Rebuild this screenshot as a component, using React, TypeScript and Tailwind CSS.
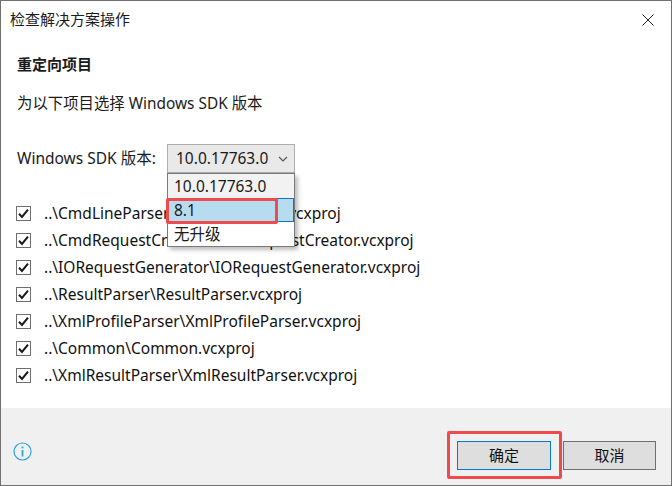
const projects = [
  '..\\CmdLineParser\\CmdLineParser.vcxproj',
  '..\\CmdRequestCreator\\CmdRequestCreator.vcxproj',
  '..\\IORequestGenerator\\IORequestGenerator.vcxproj',
  '..\\ResultParser\\ResultParser.vcxproj',
  '..\\XmlProfileParser\\XmlProfileParser.vcxproj',
  '..\\Common\\Common.vcxproj',
  '..\\XmlResultParser\\XmlResultParser.vcxproj',
]

function CheckRow({ label }: { label: string }) {
  return (
    <div className="flex h-[27px] items-center">
      <span className="-ml-[1px] flex h-[15px] w-[15px] shrink-0 items-center justify-center border border-[#6e6e6e] bg-white">
        <svg width="13" height="13" viewBox="0 0 13 13" fill="none">
          <path d="M2 6.8 L5 10 L11 2.6" stroke="#1a1a1a" strokeWidth="2" />
        </svg>
      </span>
      <span className="ml-[13px] whitespace-nowrap text-[#111]">{label}</span>
    </div>
  )
}

export default function App() {
  return (
    <div
      className="relative flex h-[486px] w-[672px] flex-col overflow-hidden border border-[#707070] bg-white text-[15.5px] text-[#1a1a1a]"
      style={{ fontFamily: '"Noto Sans", "Noto Sans CJK SC", sans-serif' }}
    >
      {/* Title bar */}
      <div className="flex h-[37px] shrink-0 items-center justify-between pl-[9px] pr-[16px]">
        <span className="text-[15px] leading-none">检查解决方案操作</span>
        <svg width="14" height="14" viewBox="0 0 14 14" fill="none">
          <path d="M1.5 1.5 L12.5 12.5 M12.5 1.5 L1.5 12.5" stroke="#222" strokeWidth="1" />
        </svg>
      </div>

      {/* Body */}
      <div className="flex-1 pl-[16px]">
        <div className="mt-[15px] text-[15px] font-bold leading-[22px]">重定向项目</div>
        <div className="mt-[18px] text-[15.4px] leading-[22px]">为以下项目选择 Windows SDK 版本</div>

        <div className="mt-[29px] flex items-center">
          <span className="w-[150px] whitespace-nowrap">Windows SDK 版本:</span>
          <div className="flex h-[29px] w-[128px] items-center justify-between border border-[#adadad] bg-[#e9e9e9] pl-[8px] pr-[6px]">
            <span>10.0.17763.0</span>
            <svg width="10" height="6" viewBox="0 0 10 6" fill="none">
              <path d="M1 1 L5 5 L9 1" stroke="#555" strokeWidth="1.2" />
            </svg>
          </div>
        </div>

        <div className="mt-[27px]">
          {projects.map((p) => (
            <CheckRow key={p} label={p} />
          ))}
        </div>
      </div>

      {/* Footer */}
      <div className="flex h-[77px] shrink-0 items-start bg-[#f0f0f0] pr-[15px] pt-[33px]">
        <svg className="ml-[12px] mt-[1px]" width="19" height="19" viewBox="0 0 19 19" fill="none">
          <circle cx="9.5" cy="9.5" r="8.5" stroke="#2ea3dd" strokeWidth="1.2" />
          <rect x="8.6" y="8" width="1.8" height="6.5" fill="#2ea3dd" />
          <rect x="8.6" y="4.5" width="1.8" height="1.8" fill="#2ea3dd" />
        </svg>
        <div className="ml-auto flex gap-[12px]">
          <button className="h-[29px] w-[94px] border border-[#0078d7] bg-[#dedede] text-[15px] text-[#111]">确定</button>
          <button className="h-[29px] w-[93px] border border-[#707070] bg-[#dedede] text-[15px] text-[#111]">取消</button>
        </div>
      </div>

      {/* Open dropdown list */}
      <div className="absolute left-[166px] top-[172px] w-[128px] border border-[#7a7a7a] bg-white shadow-[3px_3px_4px_rgba(0,0,0,0.25)]">
        <div className="flex h-[24px] items-center bg-[#f2f2f2] pl-[6px] pt-[2px]">10.0.17763.0</div>
        <div className="flex h-[24px] items-center border border-[#0078d7] bg-[#b7dcf0] pl-[5px] pt-[2px]">8.1</div>
        <div className="flex h-[24px] items-center pl-[6px] pt-[2px]">无升级</div>
      </div>

      {/* Red annotations */}
      <div className="absolute left-[165px] top-[197px] h-[26px] w-[112px] rounded-[2px] border-[3px] border-[#ee4b4e]" />
      <div className="absolute left-[446px] top-[430px] h-[48px] w-[115px] rounded-[2px] border-[3px] border-[#ee4b4e]" />
    </div>
  )
}
